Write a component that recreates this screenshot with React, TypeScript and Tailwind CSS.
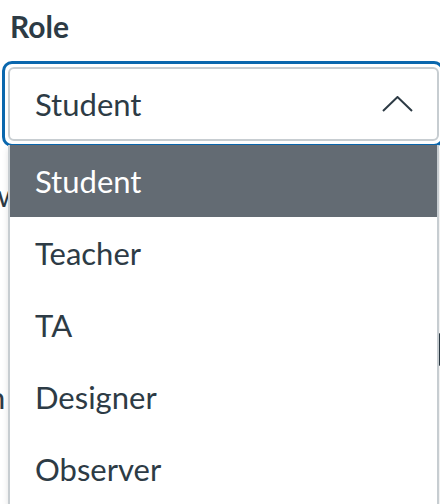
const options = ["Student", "Teacher", "TA", "Designer", "Observer"];

function ChevronUp() {
  return (
    <svg width="31" height="16" viewBox="0 0 31 16" fill="none">
      <path d="M1 15 L15.5 1 L30 15" stroke="#2d3b45" strokeWidth="2" />
    </svg>
  );
}

export default function App() {
  const selected = "Student";

  return (
    <div className="relative w-[440px] h-[504px] overflow-hidden bg-white font-['Lato',sans-serif] text-[#2d3b45]">
      <div className="pl-[10px] pt-[11px] text-[30px] leading-none font-bold">Role</div>

      <div className="mt-[20px] ml-[2px] w-[442px] rounded-[10px] border-[3px] border-[#0a67ae] p-[3px]">
        <div className="flex h-[74px] w-[431px] items-center justify-between rounded-[6px] border-2 border-[#c7cdd1] bg-white pl-[25px] pr-[24px]">
          <span className="text-[31px] leading-none">{selected}</span>
          <ChevronUp />
        </div>
      </div>

      {/* page content sitting behind the open list */}
      <div className="mt-[33px] -ml-[3px] text-[31px] leading-none">w</div>
      <div className="mt-[122px] flex justify-end">
        <div className="-mr-[6px] h-[33px] w-[8px] rounded-[3px] bg-[#2d3b45]" />
      </div>
      <div className="mt-[16px] -ml-[12px] text-[31px] leading-none">n</div>

      <ul className="absolute left-[8px] top-[145px] w-[431px] border-x-2 border-[#c7cdd1] bg-white shadow-[0_3px_6px_rgba(0,0,0,0.12)]">
        {options.map((o) => (
          <li
            key={o}
            className={
              o === selected
                ? "flex h-[72px] items-center bg-[#636b73] pl-[25px] text-[31px] leading-none text-white"
                : "flex h-[72px] items-center pl-[25px] text-[31px] leading-none"
            }
          >
            {o}
          </li>
        ))}
      </ul>
    </div>
  );
}
